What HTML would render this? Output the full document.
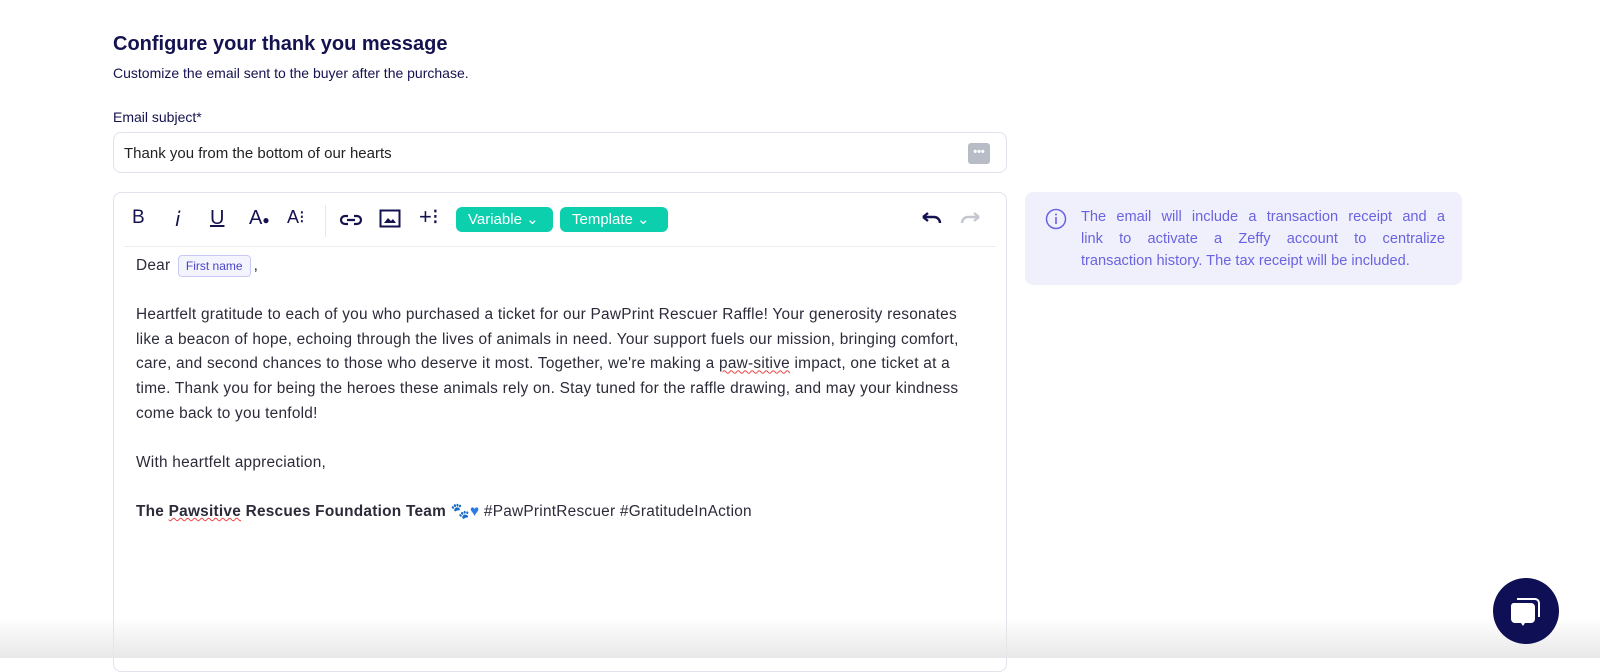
<!DOCTYPE html>
<html><head><style>
body{margin:0;width:1600px;height:658px;background:#fff;font-family:"Liberation Sans",sans-serif;overflow:hidden;position:relative;color:#2b2b3a}
.t{position:absolute;left:113px;top:33px;font-size:20px;font-weight:bold;color:#14124f}
.s{position:absolute;left:113px;top:65px;font-size:14px;color:#14124f}
.l{position:absolute;left:113px;top:109px;font-size:14px;color:#14124f}
.in{position:absolute;left:113px;top:132px;width:894px;height:41px;border:1px solid #e2e2ec;border-radius:8px;box-sizing:border-box}
.in span{position:absolute;left:10px;top:12px;font-size:15px;color:#222}
.dots{position:absolute;right:16px;top:10px;width:22px;height:21px;background:#b8bcc6;border-radius:3px;color:#fff;font-size:11px;text-align:center;line-height:18px;font-weight:bold}
.ed{position:absolute;left:113px;top:192px;width:894px;height:480px;border:1px solid #e2e2ec;border-radius:8px;box-sizing:border-box}
.sep{position:absolute;left:10px;right:10px;top:53px;border-top:1px solid #ececf2}
.ic{position:absolute;top:14px;font-size:20px;color:#14124f}
.btn{position:absolute;top:14px;height:25px;background:#0ccfae;border-radius:6px;color:#fff;font-size:15px;line-height:25px;padding:0 0 0 12px;box-sizing:border-box}
.body{position:absolute;left:22px;top:61px;width:845px;font-size:15.4px;letter-spacing:0.25px;line-height:24.6px;color:#2b2b3a}
.chip{display:inline-block;border:1px solid #c9c9f5;background:#f4f4ff;color:#4a44c8;font-size:12px;letter-spacing:0;border-radius:4px;padding:0 7px;line-height:20px;margin:0 3px}
.info{position:absolute;left:1025px;top:192px;width:437px;height:93px;background:#f0f0fd;border-radius:8px}
.info .p{position:absolute;left:56px;top:14px;width:364px;font-size:14.6px;line-height:22px;color:#6a63e0}
.j{text-align:justify;text-align-last:justify}
.sq{text-decoration:underline wavy #e44;text-decoration-thickness:1px}
</style></head><body>
<div class="t">Configure your thank you message</div>
<div class="s">Customize the email sent to the buyer after the purchase.</div>
<div class="l">Email subject*</div>
<div class="in"><span>Thank you from the bottom of our hearts</span><div class="dots">•••</div></div>
<div class="ed">
<div class="ic" style="left:18px;font-size:19px">B</div>
<div class="ic" style="left:61px;font-style:italic;font-family:'DejaVu Sans'">i</div>
<div class="ic" style="left:96px;text-decoration:underline">U</div>
<div class="ic" style="left:135px">A<span style="font-size:12px">●</span></div>
<div class="ic" style="left:173px;font-size:18px">A⁝</div>
<div style="position:absolute;left:211px;top:12px;height:32px;border-left:1px solid #e6e6ee"></div>
<svg style="position:absolute;left:225px;top:17px" width="24" height="20" viewBox="0 0 24 20"><path d="M9 6H6a4 4 0 0 0 0 8h3M15 6h3a4 4 0 0 1 0 8h-3M8 10h8" stroke="#14124f" stroke-width="2.2" fill="none"/></svg>
<svg style="position:absolute;left:265px;top:16px" width="22" height="20" viewBox="0 0 22 20"><rect x="1.5" y="1.5" width="19" height="16" fill="none" stroke="#14124f" stroke-width="2"/><path d="M5 14l4-5 3 3 2-2 3 4z" fill="#14124f"/></svg>
<div class="ic" style="left:305px;font-size:22px;top:11px">+⁝</div>
<div class="btn" style="left:342px;width:97px">Variable ⌄</div>
<div class="btn" style="left:446px;width:108px">Template ⌄</div>
<svg style="position:absolute;left:806px;top:18px" width="22" height="16"><path d="M3 6h11a6 6 0 0 1 6 6M3 6l5-4M3 6l5 4" stroke="#14124f" stroke-width="2.4" fill="none"/></svg>
<svg style="position:absolute;left:846px;top:18px" width="22" height="16"><path d="M19 6H8a6 6 0 0 0-6 6M19 6l-5-4M19 6l-5 4" stroke="#c5c7d0" stroke-width="2.4" fill="none"/></svg>
<div class="sep"></div>
<div class="body">
<div>Dear <span class="chip">First name</span>,</div>
<div style="height:24.6px"></div>
<div>Heartfelt gratitude to each of you who purchased a ticket for our PawPrint Rescuer Raffle! Your generosity resonates<br>like a beacon of hope, echoing through the lives of animals in need. Your support fuels our mission, bringing comfort,<br>care, and second chances to those who deserve it most. Together, we're making a <span class="sq">paw-sitive</span> impact, one ticket at a<br>time. Thank you for being the heroes these animals rely on. Stay tuned for the raffle drawing, and may your kindness<br>come back to you tenfold!</div>
<div style="height:24.6px"></div>
<div>With heartfelt appreciation,</div>
<div style="height:24.6px"></div>
<div><b>The <span class="sq">Pawsitive</span> Rescues Foundation Team</b> 🐾<span style="color:#2a7be4">♥</span> #PawPrintRescuer #GratitudeInAction</div>
</div>
</div>
<div class="info">
<svg style="position:absolute;left:20px;top:16px" width="22" height="22"><circle cx="11" cy="11" r="9.5" fill="none" stroke="#6a63e0" stroke-width="1.5"/><rect x="10.2" y="9" width="1.6" height="7" fill="#6a63e0"/><circle cx="11" cy="6.5" r="1" fill="#6a63e0"/></svg>
<div class="p"><div class="j">The email will include a transaction receipt and a</div><div class="j">link to activate a Zeffy account to centralize</div><div>transaction history. The tax receipt will be included.</div></div>
</div>
<div style="position:absolute;left:0;right:0;top:618px;height:40px;background:linear-gradient(#fff0,#e8e8e8)"></div>
<div style="position:absolute;left:1493px;top:578px;width:66px;height:66px;border-radius:50%;background:#0f0f55">
<svg style="position:absolute;left:16px;top:17px" width="34" height="34" viewBox="0 0 34 34"><path d="M8 4h18a4 4 0 0 1 4 4v14" stroke="#fff" stroke-width="2" fill="none"/><path d="M4 8h18a4 4 0 0 1 4 4v12a4 4 0 0 1-4 4h-6l-2 3-2-3H6a4 4 0 0 1-4-4V12a4 4 0 0 1 2-4z" fill="#fff"/></svg>
</div>
</body></html>
